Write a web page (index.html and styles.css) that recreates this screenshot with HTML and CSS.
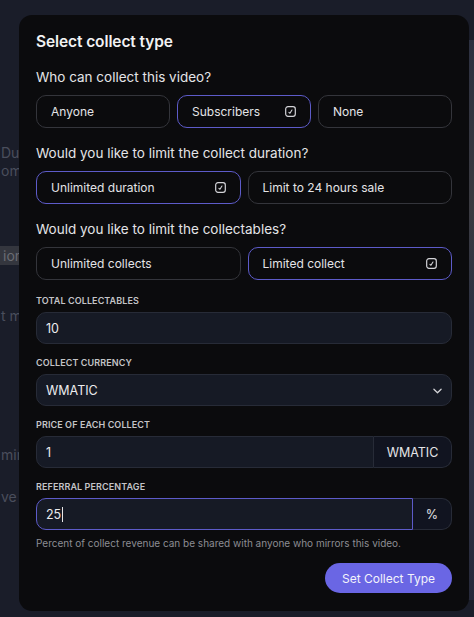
FILE: index.html
```html
<!DOCTYPE html>
<html>
<head>
<meta charset="utf-8">
<link rel="stylesheet" href="styles.css">
</head>
<body>
<div class="page">
  <div class="frag f1">Du</div>
  <div class="frag f2">om</div>
  <div class="frag f3 hl">ion</div>
  <div class="frag f4">t m</div>
  <div class="frag f5">mirr</div>
  <div class="frag f6">ve i</div>
  <div class="scroll"></div>
</div>

<div class="modal">
  <h2 class="title">Select collect type</h2>

  <p class="question">Who can collect this video?</p>
  <div class="options three">
    <button class="opt">Anyone</button>
    <button class="opt sel">Subscribers <span class="chk"><svg viewBox="0 0 12 12" width="11" height="11"><rect x="0.75" y="0.75" width="10.5" height="10.5" rx="2.5" fill="none" stroke="#d4d4d8" stroke-width="1.3"/><path d="M4.3 6.9 L5.4 7.9 L7.6 4.4" fill="none" stroke="#d4d4d8" stroke-width="1.2" stroke-linecap="round" stroke-linejoin="round"/></svg></span></button>
    <button class="opt">None</button>
  </div>

  <p class="question">Would you like to limit the collect duration?</p>
  <div class="options two">
    <button class="opt sel">Unlimited duration <span class="chk"><svg viewBox="0 0 12 12" width="11" height="11"><rect x="0.75" y="0.75" width="10.5" height="10.5" rx="2.5" fill="none" stroke="#d4d4d8" stroke-width="1.3"/><path d="M4.3 6.9 L5.4 7.9 L7.6 4.4" fill="none" stroke="#d4d4d8" stroke-width="1.2" stroke-linecap="round" stroke-linejoin="round"/></svg></span></button>
    <button class="opt">Limit to 24 hours sale</button>
  </div>

  <p class="question">Would you like to limit the collectables?</p>
  <div class="options two">
    <button class="opt">Unlimited collects</button>
    <button class="opt sel">Limited collect <span class="chk"><svg viewBox="0 0 12 12" width="11" height="11"><rect x="0.75" y="0.75" width="10.5" height="10.5" rx="2.5" fill="none" stroke="#d4d4d8" stroke-width="1.3"/><path d="M4.3 6.9 L5.4 7.9 L7.6 4.4" fill="none" stroke="#d4d4d8" stroke-width="1.2" stroke-linecap="round" stroke-linejoin="round"/></svg></span></button>
  </div>

  <div class="field first">
    <div class="label">Total collectables</div>
    <div class="input">10</div>
  </div>

  <div class="field">
    <div class="label">Collect currency</div>
    <div class="input select">WMATIC
      <svg class="chev" viewBox="0 0 10 6" width="9" height="6"><path d="M1 1 L5 5 L9 1" fill="none" stroke="#d4d4d8" stroke-width="1.4" stroke-linecap="round" stroke-linejoin="round"/></svg>
    </div>
  </div>

  <div class="field">
    <div class="label">Price of each collect</div>
    <div class="group">
      <div class="input grow">1</div>
      <div class="addon addon-w">WMATIC</div>
    </div>
  </div>

  <div class="field">
    <div class="label">Referral percentage</div>
    <div class="group">
      <div class="input grow focus">25<span class="caret"></span></div>
      <div class="addon addon-p">%</div>
    </div>
    <div class="help">Percent of collect revenue can be shared with anyone who mirrors this video.</div>
  </div>

  <div class="actions">
    <button class="primary">Set Collect Type</button>
  </div>
</div>
</body>
</html>
```

FILE: styles.css
```css
* { box-sizing: border-box; }
html, body { margin: 0; padding: 0; }
body {
  width: 474px;
  height: 617px;
  overflow: hidden;
  background: #1a1d29;
  font-family: Inter, "Noto Sans", sans-serif;
  color: #e6e6e8;
  position: relative;
}
.page { position: absolute; inset: 0; background: #1a1d29; }
.frag {
  position: absolute;
  left: 1px;
  font-size: 14px;
  color: #4a4e5c;
}
.f1 { top: 144px; }
.f2 { top: 162px; }
.f3 { top: 246px; left: 0; padding: 0 3px; background: #34363e; color: #6a6c74; height: 19px; line-height: 19px; }
.f4 { top: 307px; }
.f5 { top: 446px; }
.f6 { top: 488px; }
.scroll {
  position: absolute;
  right: 0; top: 40px;
  width: 6px; height: 560px;
  background: linear-gradient(#2c3040, #3a3a40 30%, #2b3042 50%, #303446 70%, #26293a);
}

.modal {
  position: absolute;
  left: 19px;
  top: 15px;
  width: 450px;
  height: 596px;
  background: #0b0b0d;
  border-radius: 13px;
  padding: 15px 17px 17px 17px;
  display: flex;
  flex-direction: column;
}
.title {
  margin: 0;
  font-size: 15.5px;
  line-height: 24px;
  font-weight: 600;
  color: #f2f2f3;
  letter-spacing: -0.1px;
}
.question {
  margin: 13px 0 8px;
  font-size: 13.5px;
  line-height: 20px;
  color: #e4e4e7;
}
.options + .question { margin-top: 15px; }
.options { display: grid; gap: 7px; }
.options.three { grid-template-columns: 1fr 1fr 1fr; }
.options.two { grid-template-columns: 1fr 1fr; }
.opt {
  height: 33px;
  background: #0b0b0d;
  border: 1px solid #34353b;
  border-radius: 10px;
  color: #e4e4e7;
  font-family: Inter, "Noto Sans", sans-serif;
  font-size: 12px;
  text-align: left;
  padding: 0 14px;
  display: flex;
  align-items: center;
  justify-content: space-between;
}
.opt.sel { border-color: #5d5bc9; }
.chk { display: flex; }

.field { display: flex; flex-direction: column; margin-top: 12px; }
.field.first { margin-top: 14px; }
.label {
  font-size: 9px;
  line-height: 14px;
  font-weight: 600;
  text-transform: uppercase;
  color: #c4c4c8;
  letter-spacing: 0.1px;
  margin-bottom: 4px;
}
.input {
  height: 32px;
  background: #161a25;
  border: 1px solid #272b37;
  border-radius: 10px;
  padding: 0 9px;
  display: flex;
  align-items: center;
  font-size: 12.5px;
  color: #ececee;
}
.select { justify-content: space-between; padding-right: 9px; }
.chev { margin-top: 1px; }
.group { display: flex; }
.grow { flex: 1; border-radius: 10px 0 0 10px; }
.addon {
  height: 32px;
  background: #111420;
  border: 1px solid #272b37;
  border-left: none;
  border-radius: 0 10px 10px 0;
  display: flex;
  align-items: center;
  justify-content: center;
  font-size: 12.5px;
  color: #e4e4e7;
}
.addon-w { width: 78px; }
.addon-p { width: 39px; }
.focus { border-color: #5d5bc9; border-width: 1.5px; }
.caret { display: inline-block; width: 1px; height: 15px; background: #e6e6e8; margin-left: 1px; }
.help {
  margin-top: 5px;
  font-size: 10px;
  line-height: 16px;
  color: #8d8d93;
}
.actions { margin-top: 12px; display: flex; justify-content: flex-end; }
.primary {
  height: 30px;
  width: 127px;
  border: none;
  border-radius: 16px;
  background: #6a66e4;
  color: #f3f3fb;
  font-family: Inter, "Noto Sans", sans-serif;
  font-size: 12px;
}
```
